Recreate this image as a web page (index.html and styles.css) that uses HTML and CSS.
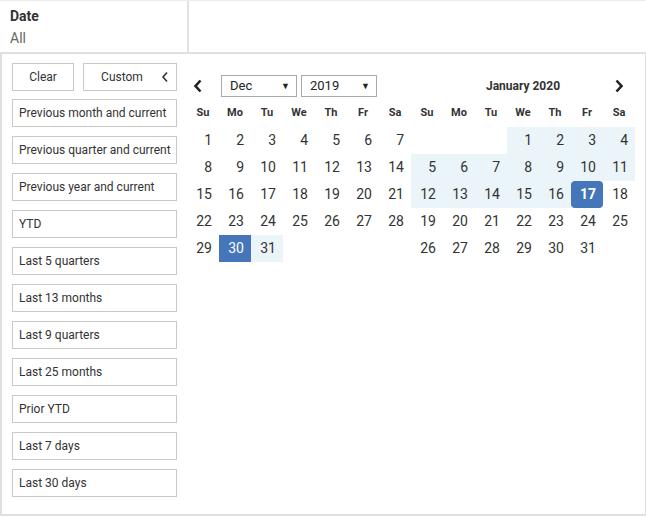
FILE: index.html
```html
<!DOCTYPE html>
<html lang="en">
<head>
    <meta charset="UTF-8">
    <title>Date filter</title>
    <link rel="stylesheet" href="styles.css">
</head>
<body>

    <div class="topbar">
        <div class="filter">
            <div class="filter-label">Date</div>
            <div class="filter-value">All</div>
        </div>
    </div>

    <div class="panel">
        <div class="ranges">
            <div class="range-top">
                <button class="btn btn-clear">Clear</button>
                <button class="btn btn-custom">Custom
                    <svg class="chev-small" width="8" height="12" viewBox="0 0 8 12"><path d="M6 1.5 L2 6 L6 10.5" fill="none" stroke="#333" stroke-width="1.6"/></svg>
                </button>
            </div>
            <button class="btn">Previous month and current</button>
            <button class="btn">Previous quarter and current</button>
            <button class="btn">Previous year and current</button>
            <button class="btn">YTD</button>
            <button class="btn">Last 5 quarters</button>
            <button class="btn">Last 13 months</button>
            <button class="btn">Last 9 quarters</button>
            <button class="btn">Last 25 months</button>
            <button class="btn">Prior YTD</button>
            <button class="btn">Last 7 days</button>
            <button class="btn">Last 30 days</button>
        </div>

        <div class="calendars">
            <div class="cal">
                <div class="cal-head">
                    <span class="nav nav-prev">
                        <svg width="10" height="14" viewBox="0 0 10 14"><path d="M7.5 1.5 L2.5 7 L7.5 12.5" fill="none" stroke="#222" stroke-width="2.6"/></svg>
                    </span>
                    <div class="sel sel-month">Dec <span class="arrow">&#9660;</span></div>
                    <div class="sel sel-year">2019 <span class="arrow">&#9660;</span></div>
                </div>
                <div class="grid" id="calLeft"></div>
            </div>
            <div class="cal">
                <div class="cal-head cal-head-right">
                    <span class="title">January 2020</span>
                    <span class="nav nav-next">
                        <svg width="10" height="14" viewBox="0 0 10 14"><path d="M2.5 1.5 L7.5 7 L2.5 12.5" fill="none" stroke="#222" stroke-width="2.6"/></svg>
                    </span>
                </div>
                <div class="grid" id="calRight"></div>
            </div>
        </div>
    </div>

    <script>
        const names = ['Su', 'Mo', 'Tu', 'We', 'Th', 'Fr', 'Sa'];

        function buildMonth(id, firstDay, days, inRange, selected) {
            const grid = document.getElementById(id);
            let html = '';
            names.forEach(n => { html += '<div class="dow">' + n + '</div>'; });
            for (let i = 0; i < firstDay; i++) html += '<div class="day"></div>';
            for (let d = 1; d <= days; d++) {
                let cls = 'day';
                if (d === selected) cls += ' active';
                else if (inRange(d)) cls += ' in-range';
                html += '<div class="' + cls + '">' + d + '</div>';
            }
            grid.innerHTML = html;
        }

        // Dec 2019 starts on Sunday, Jan 2020 on Wednesday
        buildMonth('calLeft', 0, 31, d => d > 30, 30);
        buildMonth('calRight', 3, 31, d => d < 17, 17);
    </script>

</body>
</html>
```

FILE: styles.css
```css
body { margin: 0; padding: 0; font-family: Roboto, "Liberation Sans", Arial, sans-serif; color: #333; background: #fff; width: 646px; }
.topbar { border-top: 1px solid #ebebeb; height: 51px; }
.filter { width: 177px; height: 51px; padding-left: 10px; border-right: 2px solid #e2e2e2; }
.filter-label { font-size: 14px; font-weight: bold; padding-top: 6px; line-height: 18px; color: #333; }
.filter-value { font-size: 14px; color: #666; line-height: 18px; margin-top: 4px; }

.panel { display: flex; border: 2px solid #e0e0e0; border-right-width: 1px; height: 460px; width: 643px; box-sizing: content-box; }
.ranges { display: flex; flex-direction: column; gap: 9px; padding: 9px 0 0 10px; width: 165px; }
.range-top { display: flex; justify-content: space-between; margin-bottom: -1px; }
.btn { display: block; box-sizing: border-box; width: 165px; height: 28px; padding: 0 6px; border: 1px solid #c8c8c8; background: #fff; font-family: inherit; font-size: 12px; color: #333; text-align: left; white-space: nowrap; }
.btn-clear { width: 62px; text-align: center; }
.btn-custom { width: 94px; text-align: center; padding-right: 22px; position: relative; }
.chev-small { position: absolute; right: 7px; top: 7px; }

.calendars { display: flex; margin-left: 10px; }
.cal { width: 224px; }
.cal-head { display: flex; align-items: center; height: 46px; padding-top: 21px; padding-bottom: 3px; box-sizing: border-box; position: relative; }
.nav { display: flex; width: 22px; justify-content: center; }
.nav-prev { margin-right: 12px; }
.sel { box-sizing: border-box; width: 76px; height: 22px; border: 1px solid #a9a9a9; font-size: 13px; color: #222; padding: 0 6px 0 8px; line-height: 20px; display: flex; justify-content: space-between; }
.sel-year { margin-left: 4px; }
.arrow { font-size: 9px; }
.cal-head-right { justify-content: center; }
.title { font-size: 12px; font-weight: bold; color: #333; }
.nav-next { position: absolute; right: 5px; top: 25px; }

.grid { display: grid; grid-template-columns: repeat(7, 32px); grid-auto-rows: 27px; }
.dow { font-size: 11px; font-weight: bold; text-align: center; line-height: 26px; height: 26px; color: #333; }
.day { font-size: 14px; text-align: right; padding-right: 7px; line-height: 27px; color: #333; }
.in-range { background: #ebf4f8; }
.active { background: #4576b9; color: #fff; }
#calRight .active { border-radius: 4px; font-weight: bold; }
```
